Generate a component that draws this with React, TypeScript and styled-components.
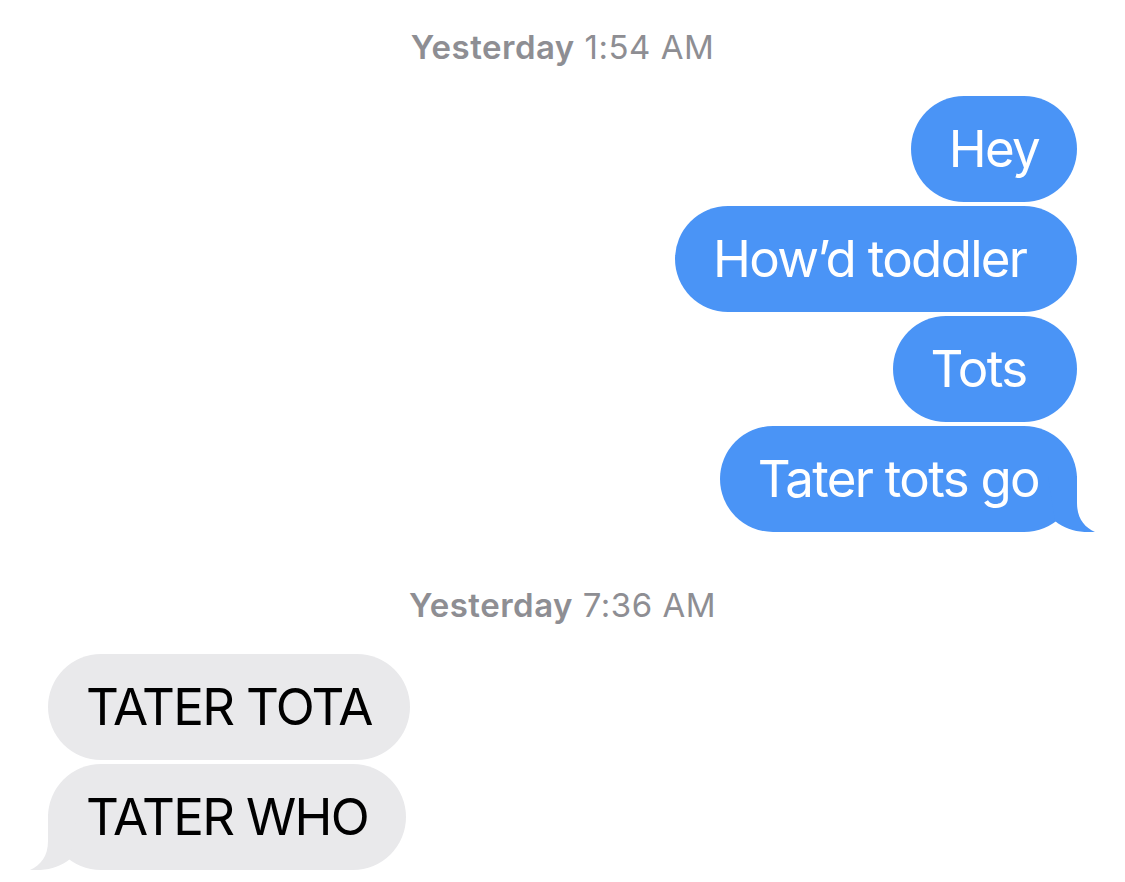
import styled, { createGlobalStyle } from "styled-components";

const GlobalStyle = createGlobalStyle`
  html, body {
    margin: 0;
    padding: 0;
    background: #ffffff;
  }
  body {
    font-family: Inter, "Noto Sans", "Liberation Sans", sans-serif;
  }
`;

const Thread = styled.div`
  display: flex;
  flex-direction: column;
  width: 1125px;
  height: 882px;
  box-sizing: border-box;
  padding: 27px 48px 0;
  background: #ffffff;
  overflow: hidden;
`;

const Stamp = styled.div<{ $gapTop?: number }>`
  height: 40px;
  line-height: 40px;
  margin-top: ${(p) => p.$gapTop ?? 0}px;
  text-align: center;
  font-size: 33px;
  color: #8e8e93;
  letter-spacing: 0.5px;

  b {
    font-weight: 600;
  }
`;

const Group = styled.div<{ $side: "sent" | "recv" }>`
  display: flex;
  flex-direction: column;
  gap: 4px;
  margin-top: 29px;
  align-items: ${(p) => (p.$side === "sent" ? "flex-end" : "flex-start")};
`;

const Bubble = styled.div<{ $side: "sent" | "recv" }>`
  position: relative;
  height: 106px;
  line-height: 106px;
  padding: 0 38px;
  border-radius: 53px;
  font-size: 51px;
  letter-spacing: -1.7px;
  white-space: pre;
  background: ${(p) => (p.$side === "sent" ? "#4a94f6" : "#e9e9eb")};
  color: ${(p) => (p.$side === "sent" ? "#ffffff" : "#000000")};
`;

const Tail = styled.svg<{ $side: "sent" | "recv" }>`
  position: absolute;
  bottom: 0;
  width: 56px;
  height: 60px;
  ${(p) =>
    p.$side === "sent"
      ? "right: -19px;"
      : "left: -19px; transform: scaleX(-1);"}
`;

const TailShape = ({ side }: { side: "sent" | "recv" }) => (
  <Tail $side={side} viewBox="0 0 56 60">
    <path
      d="M37 4 L37 31 C37 46 44 55 55 60 C40 61 26 58 15 49 L8 4 Z"
      fill={side === "sent" ? "#4a94f6" : "#e9e9eb"}
    />
  </Tail>
);

type Msg = { text: string; tail?: boolean };

const sent: Msg[] = [
  { text: "Hey" },
  { text: "How’d toddler " },
  { text: "Tots " },
  { text: "Tater tots go", tail: true },
];

const received: Msg[] = [
  { text: "TATER TOTA" },
  { text: "TATER WHO", tail: true },
];

export default function App() {
  return (
    <>
      <GlobalStyle />
      <Thread>
        <Stamp>
          <b>Yesterday</b> 1:54 AM
        </Stamp>
        <Group $side="sent">
          {sent.map((m, i) => (
            <Bubble key={i} $side="sent">
              {m.text}
              {m.tail && <TailShape side="sent" />}
            </Bubble>
          ))}
        </Group>
        <Stamp $gapTop={53}>
          <b>Yesterday</b> 7:36 AM
        </Stamp>
        <Group $side="recv">
          {received.map((m, i) => (
            <Bubble key={i} $side="recv">
              {m.text}
              {m.tail && <TailShape side="recv" />}
            </Bubble>
          ))}
        </Group>
      </Thread>
    </>
  );
}
